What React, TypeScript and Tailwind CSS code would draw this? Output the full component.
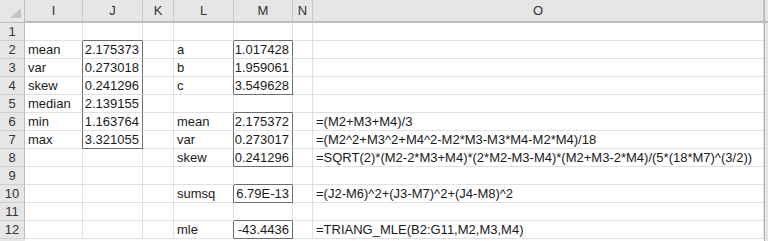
import React from "react";

const cols = ["I", "J", "K", "L", "M", "N", "O"];

type Cell = { text: string; right?: boolean };

const data: Record<number, Record<string, Cell>> = {
	2: { I: { text: "mean" }, J: { text: "2.175373", right: true }, L: { text: "a" }, M: { text: "1.017428", right: true } },
	3: { I: { text: "var" }, J: { text: "0.273018", right: true }, L: { text: "b" }, M: { text: "1.959061", right: true } },
	4: { I: { text: "skew" }, J: { text: "0.241296", right: true }, L: { text: "c" }, M: { text: "3.549628", right: true } },
	5: { I: { text: "median" }, J: { text: "2.139155", right: true } },
	6: {
		I: { text: "min" },
		J: { text: "1.163764", right: true },
		L: { text: "mean" },
		M: { text: "2.175372", right: true },
		O: { text: "=(M2+M3+M4)/3" },
	},
	7: {
		I: { text: "max" },
		J: { text: "3.321055", right: true },
		L: { text: "var" },
		M: { text: "0.273017", right: true },
		O: { text: "=(M2^2+M3^2+M4^2-M2*M3-M3*M4-M2*M4)/18" },
	},
	8: {
		L: { text: "skew" },
		M: { text: "0.241296", right: true },
		O: { text: "=SQRT(2)*(M2-2*M3+M4)*(2*M2-M3-M4)*(M2+M3-2*M4)/(5*(18*M7)^(3/2))" },
	},
	10: { L: { text: "sumsq" }, M: { text: "6.79E-13", right: true }, O: { text: "=(J2-M6)^2+(J3-M7)^2+(J4-M8)^2" } },
	12: { L: { text: "mle" }, M: { text: "-43.4436", right: true }, O: { text: "=TRIANG_MLE(B2:G11,M2,M3,M4)" } },
};

// boxed ranges (outline borders)
const boxed = (r: number, c: string) => {
	if (c === "J") return r >= 2 && r <= 7;
	if (c === "M") return (r >= 2 && r <= 4) || (r >= 6 && r <= 8) || r === 10 || r === 12;
	return false;
};

const nextCol = (c: string) => cols[cols.indexOf(c) + 1] || "";

const rows = Array.from({ length: 12 }, (_, i) => i + 1);

const App = () => {
	return (
		<div
			className="w-[768px] h-[241px] overflow-hidden bg-white text-[#1a1a1a]"
			style={{ fontFamily: "'Liberation Sans', Arial, sans-serif" }}
		>
			<div className="grid grid-cols-[25px_58px_60px_31px_60px_59px_20px_451px_4px] grid-rows-[23px_repeat(12,18px)_2px]">
				{/* header row */}
				<div className="bg-[#e6e6e6] border-r border-b border-[#bcbcbc] flex items-end justify-end pr-[3px] pb-[4px]">
					<svg width="11" height="10" viewBox="0 0 11 10">
						<polygon points="11,0 11,10 0,10" fill="#c3c3c3" />
					</svg>
				</div>
				{cols.map((c) => (
					<div
						key={c}
						className="bg-[#e6e6e6] border-r border-b-2 border-r-[#cacaca] border-b-[#bdbdbd] flex items-center justify-center text-[13px] text-[#333] pt-[1px]"
					>
						{c}
					</div>
				))}
				<div className="bg-[#e6e6e6] border-l border-b-2 border-l-[#b5b5b5] border-b-[#bdbdbd]"></div>

				{rows.map((r) => (
					<React.Fragment key={r}>
						<div className="bg-[#e6e6e6] border-r border-b border-r-[#bdbdbd] border-b-[#d0d0d0] flex items-center justify-center text-[13px] text-[#333] pt-[1px]">
							{r}
						</div>
						{cols.map((c) => {
							const cell = data[r]?.[c];
							const darkRight = boxed(r, c) || boxed(r, nextCol(c));
							const darkBottom = boxed(r, c) !== boxed(r + 1, c);
							return (
								<div
									key={c}
									className={`flex items-center whitespace-nowrap text-[13px] pt-[1px] border-r border-b ${
										darkRight ? "border-r-[#6e6e6e]" : "border-r-[#e0e0e0]"
									} ${darkBottom ? "border-b-[#6e6e6e]" : "border-b-[#e0e0e0]"} ${
										cell?.right ? "justify-end pr-[3px]" : "justify-start pl-[3px]"
									}`}
								>
									{cell?.text}
								</div>
							);
						})}
						<div className="bg-[#e6e6e6] border-l border-l-[#b5b5b5]"></div>
					</React.Fragment>
				))}
				<div className="bg-[#e6e6e6]"></div>
				<div className="col-span-7 bg-white"></div>
				<div className="bg-[#e6e6e6] border-l border-l-[#b5b5b5]"></div>
			</div>
		</div>
	);
};

export default App;
